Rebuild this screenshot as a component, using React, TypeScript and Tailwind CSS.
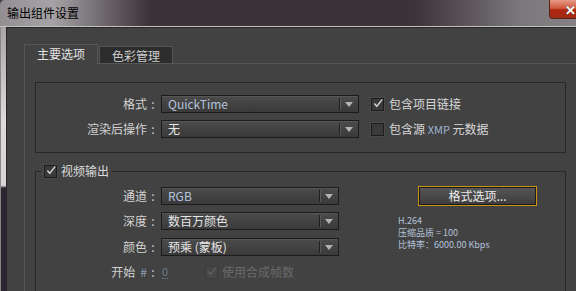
import type { ReactNode } from 'react'

function Check({ checked = false, disabled = false }: { checked?: boolean; disabled?: boolean }) {
  return (
    <span
      className={
        disabled
          ? 'flex h-[13px] w-[13px] items-center justify-center border border-[#3b3b3b] bg-[#474747]'
          : 'flex h-[13px] w-[13px] items-center justify-center border border-[#1c1c1c] bg-[#3a3a3a] shadow-[0_0_0_1px_#4a4a4a]'
      }
    >
      {checked && (
        <svg width="11" height="11" viewBox="0 0 11 11" className="-mt-[1px] ml-[1px]">
          <path
            d="M1.5 5.5 L4.2 8.6 L10.2 1"
            fill="none"
            stroke={disabled ? '#5e5e5e' : '#cfcfcf'}
            strokeWidth="1.6"
          />
        </svg>
      )}
    </span>
  )
}

function Select({ value, className, blue }: { value: string; className: string; blue?: boolean }) {
  return (
    <div
      className={`flex h-[18px] items-center border border-[#1c1c1c] bg-gradient-to-b from-[#4b4b4b] to-[#3a3a3a] shadow-[inset_0_1px_0_#565656] ${className}`}
    >
      <span
        className={`flex-1 whitespace-nowrap pl-[6px] text-[12px] leading-[16px] ${blue ? 'text-[#b3c3dc]' : 'text-[#e6e6e6]'}`}
      >
        {value}
      </span>
      <span className="h-[12px] w-px bg-[#1f1f1f] shadow-[1px_0_0_#5a5a5a]" />
      <span className="flex w-[18px] justify-center">
        <svg width="8" height="5" viewBox="0 0 8 5">
          <path d="M0 0 H8 L4 5 Z" fill="#b4b4b4" />
        </svg>
      </span>
    </div>
  )
}

function Row({ label, children }: { label: ReactNode; children: ReactNode }) {
  return (
    <div className="flex h-[18px] items-center">
      <span className="flex w-[123px] items-center justify-end text-[12px] leading-[16px] text-[#d2d2d2]">
        {label}
        <span className="inline-block w-[12px] text-center">:</span>
      </span>
      <span className="w-[2px]" />
      {children}
    </div>
  )
}

export default function App() {
  return (
    <div className="relative h-[291px] w-[576px] overflow-hidden bg-[#424242] font-['Noto_Sans_CJK_SC',sans-serif]">
      {/* title bar */}
      <div className="flex h-[27px] items-center rounded-tl-[5px] border-b border-[#c4c0c4] bg-[linear-gradient(to_right,#928e92,#a6a3a6_9%,#3b333a_26%,#3b333a_72%,#7a767a_90%,#858185)] pl-[7px]">
        <span className="text-[12px] leading-[16px] text-black">输出组件设置</span>
      </div>
      <div className="absolute left-[549px] top-0 flex h-[19px] w-[40px] items-center justify-center rounded-bl-[4px] border border-t-0 border-[#5a2418] bg-[linear-gradient(to_bottom,#e79a86,#cf5a40_45%,#b0260f_55%,#a02a18)]">
        <span className="ml-[2px] text-[13px] font-bold leading-none text-white [text-shadow:0_0_1px_#333]">✕</span>
      </div>

      <div className="flex h-[264px]">
        {/* left frame */}
        <div className="w-[6px] border-l border-[#8a868a] bg-[linear-gradient(to_bottom,#a8a5a8,#dcdadc_35%,#d6d4d6_60%,#2d2530_61%,#2d2530)]" />
        <div className="flex flex-1 flex-col border-l border-t border-[#262626] pl-[17px] pt-[16px]">
          {/* tabs */}
          <div className="relative z-10 flex items-end">
            <div className="-mb-px flex h-[20px] w-[74px] items-center justify-center border-l border-r border-t border-[#575757] bg-[#424242] pb-[2px] text-[12px] leading-[16px] text-[#e2e2e2]">
              主要选项
            </div>
            <div className="ml-[1px] flex h-[17px] w-[74px] items-center justify-center border border-b-0 border-[#555555] bg-[#2d2d2d] text-[12px] leading-[15px] text-[#cdcdcd]">
              色彩管理
            </div>
          </div>

          {/* panel */}
          <div className="flex-1 border-l border-t border-[#575757] pl-[10px] pt-[18px]">
            <div className="flex h-[71px] w-[531px] flex-col gap-[7px] border border-[#272727] pt-[12px]">
              <div className="flex items-center">
                <Row label="格式">
                  <Select value="QuickTime" className="w-[198px]" blue />
                </Row>
                <div className="ml-[12px] flex items-center gap-[5px]">
                  <Check checked />
                  <span className="text-[12px] leading-[16px] text-[#d8d8d8]">包含项目链接</span>
                </div>
              </div>
              <div className="flex items-center">
                <Row label="渲染后操作">
                  <Select value="无" className="w-[198px]" />
                </Row>
                <div className="ml-[12px] flex items-center gap-[5px]">
                  <Check />
                  <span className="text-[12px] leading-[16px] text-[#d8d8d8]">
                    包含源 <span className="text-[11px] text-[#9fb2cf]">XMP</span> 元数据
                  </span>
                </div>
              </div>
            </div>

            <fieldset className="mt-[11px] w-[531px] border border-b-0 border-[#272727] pb-[20px]">
              <legend className="ml-[5px] px-[3px]">
                <div className="flex h-[14px] items-center gap-[4px]">
                  <Check checked />
                  <span className="text-[12px] leading-[16px] text-[#dadada]">视频输出</span>
                </div>
              </legend>
              <div className="flex pt-[9px]">
                <div className="flex flex-col">
                  <Row label="通道">
                    <Select value="RGB" className="w-[178px]" blue />
                  </Row>
                  <div className="mt-[7px]">
                    <Row label="深度">
                      <Select value="数百万颜色" className="w-[178px]" />
                    </Row>
                  </div>
                  <div className="mt-[8px]">
                    <Row label="颜色">
                      <Select value="预乘 (蒙板)" className="w-[178px]" />
                    </Row>
                  </div>
                  <div className="mt-[7px]">
                    <Row
                      label={
                        <>
                          开始 <span className="ml-[5px] text-[#8d9db5]">#</span>
                        </>
                      }
                    >
                      <span className="ml-[1px] border-b border-dotted border-[#6a7585] text-[11px] leading-[13px] text-[#6c7a8c]">
                        0
                      </span>
                      <span className="ml-[37px] flex items-center gap-[4px]">
                        <Check checked disabled />
                        <span className="text-[12px] leading-[16px] text-[#6a6a6a]">使用合成帧数</span>
                      </span>
                    </Row>
                  </div>
                </div>

                <div className="ml-[59px] flex flex-col">
                  <div className="-mt-[1px] ml-[20px] flex h-[20px] w-[119px] border border-[#c99315]">
                    <div className="flex flex-1 items-center justify-center border border-[#1a1a1a] bg-gradient-to-b from-[#555555] to-[#3d3d3d] text-[12px] leading-[16px] text-[#ececec]">
                      格式选项...
                    </div>
                  </div>
                  <div className="mt-[9px] text-[9px] leading-[12px] text-[#b2c2da]">
                    <div>H.264</div>
                    <div>压缩品质 = 100</div>
                    <div>比特率：6000.00 Kbps</div>
                  </div>
                </div>
              </div>
            </fieldset>
          </div>
        </div>
      </div>
    </div>
  )
}
